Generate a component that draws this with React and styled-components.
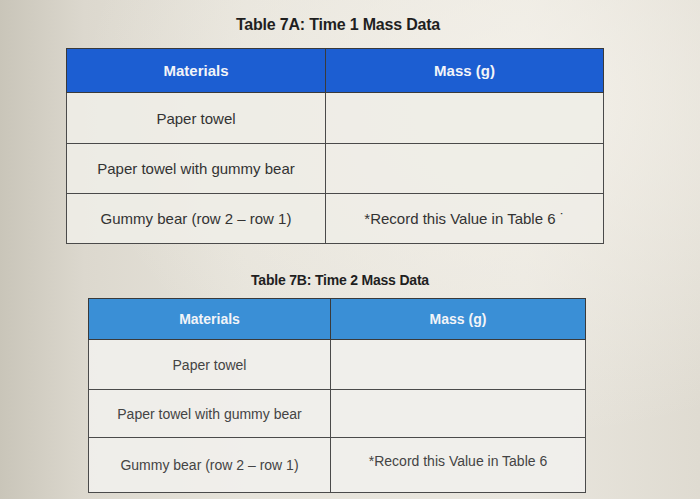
import React from "react";
import styled, { createGlobalStyle } from "styled-components";

const Global = createGlobalStyle`
  html, body { margin: 0; padding: 0; }
  body { font-family: "Liberation Sans", Arial, sans-serif; }
`;

const Page = styled.div`
  width: 700px;
  height: 499px;
  overflow: hidden;
  box-sizing: border-box;
  background:
    radial-gradient(ellipse at 75% 20%, rgba(246,243,236,0.8) 0%, rgba(246,243,236,0) 60%),
    linear-gradient(90deg, #c9c5b9 0%, #dcd8ce 12%, #e6e3da 35%, #e9e6de 75%, #dfdbd1 100%);
  display: flex;
  flex-direction: column;
`;

const Section = styled.section`
  display: flex;
  flex-direction: column;
  align-items: center;
  margin-left: ${p => p.$left}px;
  width: ${p => p.$width}px;
  margin-top: ${p => p.$top}px;
`;

const Title = styled.h2`
  margin: 0 0 ${p => p.$gap}px ${p => p.$offset}px;
  font-size: ${p => p.$size}px;
  font-weight: 700;
  color: #1f1f1f;
  line-height: 18px;
  letter-spacing: -0.2px;
`;

const Table = styled.table`
  width: 100%;
  border-collapse: collapse;
  table-layout: fixed;
  border: 1px solid #4a4a4a;
`;

const HeadCell = styled.th`
  background: ${p => p.$bg};
  color: #f2f4f8;
  font-size: ${p => p.$size}px;
  font-weight: 700;
  height: ${p => p.$h}px;
  border: 1px solid #3a3a3a;
  padding: 0;
  text-align: center;
  box-sizing: border-box;
`;

const Cell = styled.td`
  background: ${p => p.$bg};
  color: ${p => p.$color};
  font-size: ${p => p.$size}px;
  height: ${p => p.$h}px;
  border: 1px solid #4a4a4a;
  padding: 0 0 ${p => p.$lift || 0}px 0;
  text-align: center;
  vertical-align: middle;
  box-sizing: border-box;
`;

const rows = ["Paper towel", "Paper towel with gummy bear", "Gummy bear (row 2 \u2013 row 1)"];

function MassTable({ title, left, width, top, titleSize, titleGap, headBg, headH, rowH, leftCol, size, color, cellBg, note, noteLift, titleOffset }) {
  return (
    <Section $left={left} $width={width} $top={top}>
      <Title $size={titleSize} $gap={titleGap} $offset={titleOffset}>{title}</Title>
      <Table>
        <colgroup>
          <col style={{ width: leftCol }} />
          <col />
        </colgroup>
        <thead>
          <tr>
            <HeadCell $bg={headBg} $h={headH} $size={size}>Materials</HeadCell>
            <HeadCell $bg={headBg} $h={headH} $size={size}>Mass (g)</HeadCell>
          </tr>
        </thead>
        <tbody>
          {rows.map((r, i) => (
            <tr key={r}>
              <Cell $bg={cellBg} $h={rowH[i]} $size={size} $color={color}>{r}</Cell>
              <Cell $bg={cellBg} $h={rowH[i]} $size={size} $color={color} $lift={i === 2 ? noteLift : 0}>
                {i === 2 ? note : ""}
              </Cell>
            </tr>
          ))}
        </tbody>
      </Table>
    </Section>
  );
}

export default function App() {
  return (
    <>
      <Global />
      <Page>
        <MassTable
          title="Table 7A: Time 1 Mass Data"
          left={66}
          width={538}
          top={16}
          titleSize={16}
          titleGap={14}
          titleOffset={6}
          headBg="#1c5ed2"
          headH={44}
          rowH={[51, 50, 50]}
          leftCol={259}
          size={15}
          color="#333333"
          cellBg="rgba(238,237,231,0.9)"
          note={"*Record this Value in Table 6 \u02D9"}
          noteLift={0}
        />
        <MassTable
          title="Table 7B: Time 2 Mass Data"
          left={88}
          width={498}
          top={27}
          titleSize={14}
          titleGap={9}
          titleOffset={6}
          headBg="#3a8fd6"
          headH={41}
          rowH={[50, 48, 55]}
          leftCol={242}
          size={14}
          color="#444444"
          cellBg="rgba(241,240,236,0.9)"
          note="*Record this Value in Table 6"
          noteLift={8}
        />
      </Page>
    </>
  );
}
